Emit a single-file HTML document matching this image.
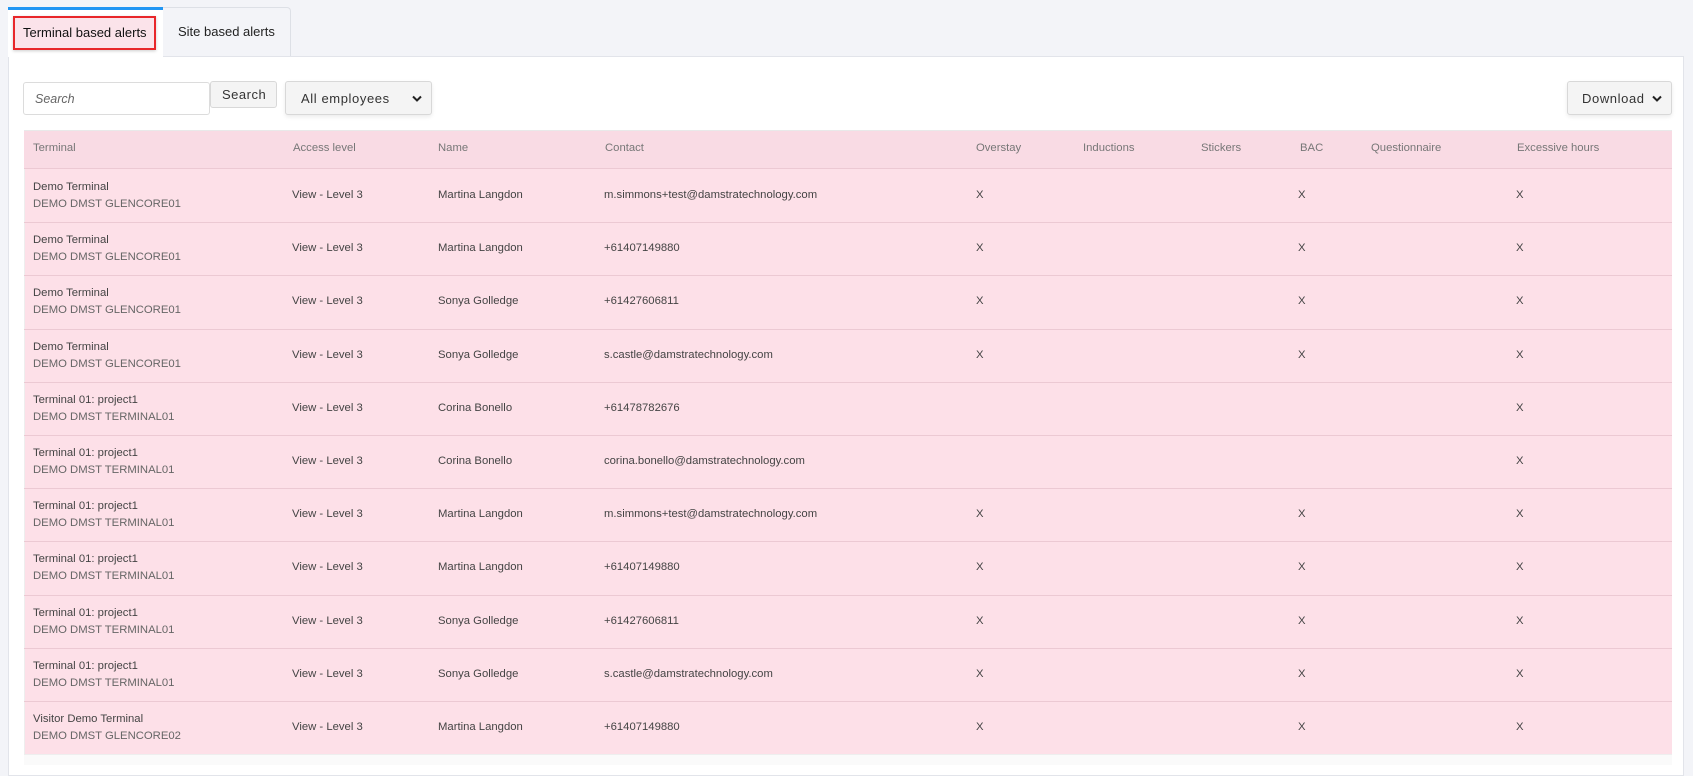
<!DOCTYPE html>
<html><head><meta charset="utf-8"><style>
*{box-sizing:border-box;margin:0;padding:0}
body{width:1693px;height:765px;overflow:hidden;background:#f3f4f8;font-family:"Liberation Sans",sans-serif;color:#444;position:relative}
.a{position:absolute}
.tab1{left:8px;top:7px;width:155px;height:50px;background:#fff;border-top:3px solid #2196f3;z-index:2}
.tab1 .in{position:absolute;left:5px;top:6px;width:143px;height:34px;border:2px solid #e8262a;background:#fbe3ea;font-size:13px;color:#111;line-height:30px;padding-left:8px;box-shadow:0 1px 3px rgba(0,0,0,.2)}
.tab2{left:163px;top:7px;width:128px;height:50px;border:1px solid #dde0e6;border-left:none;border-bottom:none;border-radius:0 4px 0 0;font-size:13px;color:#222;padding:16px 0 0 15px}
.panel{left:8px;top:56px;width:1676px;height:720px;background:#fff;border:1px solid #e2e4ea}
.inp{left:23px;top:82px;width:187px;height:33px;border:1px solid #dcdcdc;border-radius:3px;background:#fff;font-size:12.5px;font-style:italic;color:#666;padding:9px 11px}
.btn{left:210px;top:81px;width:67px;height:27px;border:1px solid #d8d8d8;border-radius:3px;background:#f4f4f4;font-size:13px;letter-spacing:.5px;padding:5px 11px;color:#333}
.sel{border:1px solid #d8d8d8;border-radius:3px;background:#f4f4f4;font-size:13px;letter-spacing:.6px;color:#333;box-shadow:0 2px 4px rgba(0,0,0,.08)}
.sel svg{position:absolute;right:9px;top:13px}
.tbl{left:24px;top:130px;width:1648px;height:624px;background:#fde0e8;border-left:1px solid #eee}
.hd{left:24px;top:130px;width:1648px;height:39px;background:#f9dbe4;border-bottom:1px solid #ecc9d3;border-top:1px solid #e9e9e9}
.t{position:absolute;font-size:11.3px;white-space:nowrap}
.h{color:#777;font-size:11.3px}
.line{position:absolute;left:24px;width:1648px;height:1px;background:#ecc9d3}
</style></head><body>
<div class="a tab1"><div class="in">Terminal based alerts</div></div>
<div class="a tab2">Site based alerts</div>
<div class="a panel"></div>
<div class="a inp">Search</div>
<div class="a btn">Search</div>
<div class="a sel" style="left:285px;top:81px;width:147px;height:34px;padding:9px 15px">All employees<svg width="10" height="7" viewBox="0 0 10 7"><path d="M1 1.5L5 5.5L9 1.5" fill="none" stroke="#222" stroke-width="2"/></svg></div>
<div class="a sel" style="left:1567px;top:81px;width:105px;height:34px;padding:9px 14px">Download<svg width="10" height="7" viewBox="0 0 10 7"><path d="M1 1.5L5 5.5L9 1.5" fill="none" stroke="#222" stroke-width="2"/></svg></div>
<div class="a tbl"></div>
<div class="a hd"></div>
<div class="a" style="left:24px;top:754px;width:1648px;height:11px;background:#fafafa;border-top:1px solid #eee"></div>
<div id="c"></div>
<script>
var cols=[33,293,438,605,976,1083,1201,1300,1371,1517];
var hs=["Terminal","Access level","Name","Contact","Overstay","Inductions","Stickers","BAC","Questionnaire","Excessive hours"];
var h="";
hs.forEach(function(s,i){h+='<div class="t h" style="left:'+cols[i]+'px;top:142px">'+s+'</div>'});
var rows=[
["Demo Terminal","DEMO DMST GLENCORE01","Martina Langdon","m.simmons+test@damstratechnology.com",1],
["Demo Terminal","DEMO DMST GLENCORE01","Martina Langdon","+61407149880",1],
["Demo Terminal","DEMO DMST GLENCORE01","Sonya Golledge","+61427606811",1],
["Demo Terminal","DEMO DMST GLENCORE01","Sonya Golledge","s.castle@damstratechnology.com",1],
["Terminal 01: project1","DEMO DMST TERMINAL01","Corina Bonello","+61478782676",0],
["Terminal 01: project1","DEMO DMST TERMINAL01","Corina Bonello","corina.bonello@damstratechnology.com",0],
["Terminal 01: project1","DEMO DMST TERMINAL01","Martina Langdon","m.simmons+test@damstratechnology.com",1],
["Terminal 01: project1","DEMO DMST TERMINAL01","Martina Langdon","+61407149880",1],
["Terminal 01: project1","DEMO DMST TERMINAL01","Sonya Golledge","+61427606811",1],
["Terminal 01: project1","DEMO DMST TERMINAL01","Sonya Golledge","s.castle@damstratechnology.com",1],
["Visitor Demo Terminal","DEMO DMST GLENCORE02","Martina Langdon","+61407149880",1]];
rows.forEach(function(r,i){
 var y=169+i*53.2;
 if(i>0)h+='<div class="line" style="top:'+y+'px"></div>';
 h+='<div class="t" style="left:33px;top:'+(y+12)+'px;color:#444">'+r[0]+'</div>';
 h+='<div class="t" style="left:33px;top:'+(y+29)+'px;color:#666">'+r[1]+'</div>';
 var m=y+20;
 h+='<div class="t" style="left:292px;top:'+m+'px">View - Level 3</div>';
 h+='<div class="t" style="left:438px;top:'+m+'px">'+r[2]+'</div>';
 h+='<div class="t" style="left:604px;top:'+m+'px">'+r[3]+'</div>';
 if(r[4]){h+='<div class="t" style="left:976px;top:'+m+'px">X</div><div class="t" style="left:1298px;top:'+m+'px">X</div>';}
 h+='<div class="t" style="left:1516px;top:'+m+'px">X</div>';
});
document.getElementById("c").innerHTML=h;
</script>
</body></html>
